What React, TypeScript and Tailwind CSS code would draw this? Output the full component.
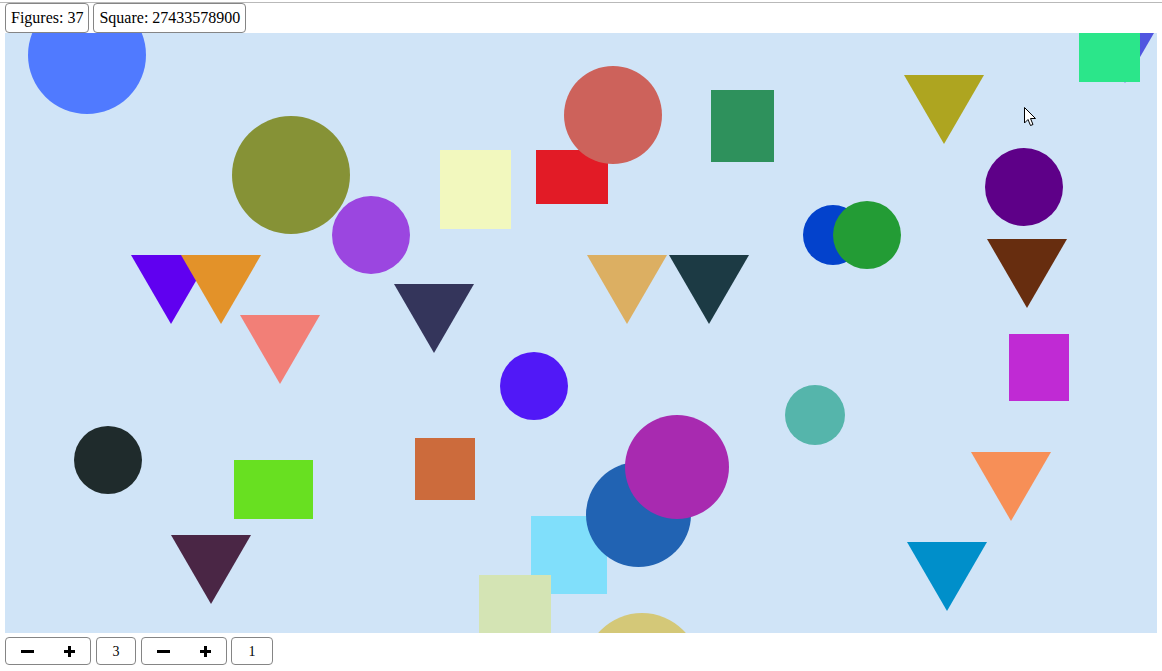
type Kind = "circle" | "rect" | "tri";

interface Figure {
  kind: Kind;
  x: number;
  y: number;
  w: number;
  h?: number;
  color: string;
}

// coordinates are relative to the canvas (top-left at 5,33 on the page)
const figures: Figure[] = [
  { kind: "circle", x: 23, y: -37, w: 118, color: "#507aff" },
  { kind: "circle", x: 227, y: 83, w: 118, color: "#869236" },
  { kind: "circle", x: 327, y: 163, w: 78, color: "#9b46e0" },
  { kind: "rect", x: 531, y: 117, w: 72, h: 54, color: "#e21b26" },
  { kind: "circle", x: 559, y: 33, w: 98, color: "#cd625b" },
  { kind: "rect", x: 435, y: 117, w: 71, h: 79, color: "#f2f8be" },
  { kind: "rect", x: 706, y: 57, w: 63, h: 72, color: "#2e915c" },
  { kind: "tri", x: 899, y: 42, w: 80, color: "#aea520" },
  { kind: "tri", x: 1080, y: -19, w: 80, color: "#5056e0" },
  { kind: "rect", x: 1074, y: -12, w: 61, h: 61, color: "#2be68a" },
  { kind: "circle", x: 980, y: 115, w: 78, color: "#5e0088" },
  { kind: "circle", x: 798, y: 172, w: 60, color: "#0342cc" },
  { kind: "circle", x: 828, y: 168, w: 68, color: "#239c35" },
  { kind: "tri", x: 982, y: 206, w: 80, color: "#672d0f" },
  { kind: "tri", x: 126, y: 222, w: 80, color: "#6000f0" },
  { kind: "tri", x: 176, y: 222, w: 80, color: "#e39229" },
  { kind: "tri", x: 235, y: 282, w: 80, color: "#f27f77" },
  { kind: "tri", x: 389, y: 251, w: 80, color: "#34355b" },
  { kind: "tri", x: 582, y: 222, w: 80, color: "#dcaf62" },
  { kind: "tri", x: 664, y: 222, w: 80, color: "#1c3a44" },
  { kind: "circle", x: 495, y: 319, w: 68, color: "#5118f7" },
  { kind: "rect", x: 1004, y: 301, w: 60, h: 67, color: "#c02ad4" },
  { kind: "circle", x: 780, y: 352, w: 60, color: "#55b5ab" },
  { kind: "circle", x: 69, y: 393, w: 68, color: "#1f2b2c" },
  { kind: "rect", x: 229, y: 427, w: 79, h: 59, color: "#68e021" },
  { kind: "rect", x: 410, y: 405, w: 60, h: 62, color: "#cc6b3c" },
  { kind: "tri", x: 966, y: 419, w: 80, color: "#f78f57" },
  { kind: "tri", x: 902, y: 509, w: 80, color: "#008fca" },
  { kind: "tri", x: 166, y: 502, w: 80, color: "#4a2645" },
  { kind: "rect", x: 526, y: 483, w: 76, h: 78, color: "#80dffb" },
  { kind: "circle", x: 581, y: 429, w: 105, color: "#2163b3" },
  { kind: "circle", x: 620, y: 382, w: 104, color: "#a82ab0" },
  { kind: "rect", x: 474, y: 542, w: 72, h: 80, color: "#d4e4b4" },
  { kind: "circle", x: 579, y: 580, w: 116, color: "#d4c878" },
];

function Shape({ f }: { f: Figure }) {
  const h = f.kind === "tri" ? 69 : f.h ?? f.w;
  let cls = "absolute";
  if (f.kind === "circle") cls += " rounded-full";
  if (f.kind === "tri") cls += " [clip-path:polygon(0_0,100%_0,50%_100%)]";
  return (
    <div
      className={cls}
      style={{ left: f.x, top: f.y, width: f.w, height: h, backgroundColor: f.color }}
    />
  );
}

function Stepper({ className = "" }: { className?: string }) {
  return (
    <div className={"flex h-[28px] w-[86px] items-center rounded-[4px] border border-[#858585] bg-white " + className}>
      {/* Minus */}
      <div className="flex w-[42px] justify-center">
        <div className="h-[3px] w-[13px] bg-black" />
      </div>
      {/* Plus */}
      <div className="flex w-[42px] justify-center">
        <div className="relative h-[11px] w-[11px]">
          <div className="absolute left-0 top-[4px] h-[3px] w-[11px] bg-black" />
          <div className="absolute left-[4px] top-0 h-[11px] w-[3px] bg-black" />
        </div>
      </div>
    </div>
  );
}

function NumberBox({ value, className = "" }: { value: string; className?: string }) {
  return (
    <div
      className={
        "flex h-[28px] items-center justify-center rounded-[4px] border border-[#858585] bg-white text-[14px] text-black " +
        className
      }
    >
      {value}
    </div>
  );
}

export default function App() {
  return (
    <div className="h-[671px] w-[1162px] bg-white font-['Liberation_Serif',serif] text-black">
      <div className="h-[2px] bg-white" />
      <div className="h-px bg-[#b9b9b9]" />

      {/* Stats */}
      <div className="flex gap-[4px] px-[5px]">
        <div className="flex h-[30px] items-center rounded-[4px] border border-[#858585] bg-white px-[5px] text-[16px] leading-none">
          Figures: 37
        </div>
        <div className="flex h-[30px] items-center rounded-[4px] border border-[#858585] bg-white px-[5px] text-[16px] leading-none">
          Square: 27433578900
        </div>
      </div>

      {/* Canvas */}
      <div className="relative mx-[5px] h-[600px] w-[1152px] overflow-hidden bg-[#d0e4f7]">
        {figures.map((f, i) => (
          <Shape key={i} f={f} />
        ))}
        {/* mouse pointer */}
        <svg className="absolute left-[1019px] top-[74px]" width="13" height="20" viewBox="0 0 13 20">
          <path d="M0.5 0.5 L0.5 16 L4 12.5 L6.5 18.5 L9 17.5 L6.5 11.5 L11.5 11.5 Z" fill="white" stroke="black" strokeWidth="1" />
        </svg>
      </div>

      {/* Controls */}
      <div className="mt-[4px] flex px-[5px]">
        <Stepper />
        <NumberBox value="3" className="ml-[5px] w-[40px]" />
        <Stepper className="ml-[5px]" />
        <NumberBox value="1" className="ml-[4px] w-[42px]" />
      </div>
    </div>
  );
}
